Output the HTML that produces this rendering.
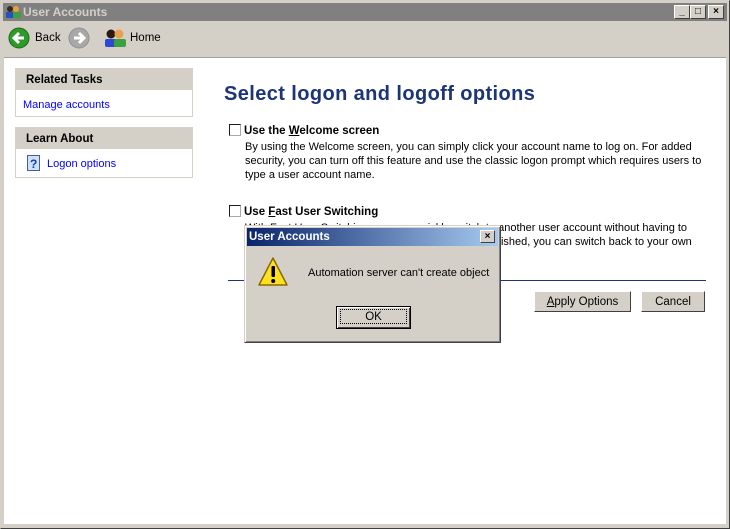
<!DOCTYPE html>
<html><head><style>
*{margin:0;padding:0;box-sizing:border-box}
body{width:730px;height:529px;background:#d4d0c8;font-family:"Liberation Sans",sans-serif;font-size:11px;position:relative;overflow:hidden}
.abs{position:absolute}
.frame{left:0;top:0;width:730px;height:529px;border:1px solid #d4d0c8;border-right-color:#404040;border-bottom-color:#404040}
.title{left:3px;top:3px;width:724px;height:18px;background:#808080;color:#d4d0c8;font-weight:bold;font-size:12px;line-height:18px;padding-left:20px}
.tb{width:16px;height:14px;top:5px;background:#d4d0c8;border:1px solid;border-color:#fff #404040 #404040 #fff;font-size:10px;line-height:11px;text-align:center;color:#000;font-weight:bold}
.content{left:4px;top:57px;width:722px;height:467px;background:#fff;border-top:1px solid #a0a0a0}
.box{left:15px;width:178px;border:1px solid #d4d0c8;background:#fff}
.box .h{background:#d4d0c8;font-weight:bold;height:21px;line-height:22px;padding-left:10px;font-size:11.5px}
.link{color:#0000ff}
h1{position:absolute;left:224px;top:83px;font-size:20px;color:#1c3478;font-family:"Liberation Sans",sans-serif;font-weight:bold;letter-spacing:0.4px}
.cb{width:12px;height:12px;border:1px solid #1c1c1c;border-right-color:#aaa;border-bottom-color:#aaa;background:#fff}
.opt{font-weight:bold;font-size:11.5px}
.desc{font-size:11px;line-height:14px;color:#000}
.btn{height:21px;background:#d4d0c8;border:1px solid;border-color:#fff #404040 #404040 #fff;text-align:center;line-height:20px;font-size:11.5px}
</style></head><body>
<div class="abs frame"></div>
<div class="abs title">User Accounts</div>
<svg class="abs" style="left:5px;top:5px" width="16" height="14"><circle cx="5" cy="4" r="3" fill="#3a2a1a"/><rect x="1" y="7" width="8" height="6" fill="#2a50c0"/><circle cx="11" cy="4" r="3" fill="#e8a040"/><rect x="8" y="7" width="8" height="6" fill="#3aa040"/></svg>
<div class="abs tb" style="left:674px">_</div>
<div class="abs tb" style="left:690px">□</div>
<div class="abs tb" style="left:708px">×</div>
<svg class="abs" style="left:8px;top:27px" width="22" height="22"><circle cx="11" cy="11" r="10" fill="#2f9a2a" stroke="#1d6a1a"/><path d="M16 11H7M11 6l-5 5 5 5" stroke="#fff" stroke-width="3" fill="none"/></svg>
<div class="abs" style="left:35px;top:32px;font-size:11.5px">Back</div>
<svg class="abs" style="left:68px;top:27px" width="22" height="22"><circle cx="11" cy="11" r="10" fill="#a8a8a8" stroke="#909090"/><path d="M6 11h9M11 6l5 5-5 5" stroke="#fff" stroke-width="3" fill="none"/></svg>
<svg class="abs" style="left:103px;top:28px" width="24" height="20"><circle cx="8" cy="6" r="4.5" fill="#2a1a10"/><rect x="2" y="11" width="12" height="8" rx="2" fill="#2a4ad0"/><circle cx="16" cy="6" r="4.5" fill="#e8a050"/><rect x="11" y="11" width="12" height="8" rx="2" fill="#3aa040"/></svg>
<div class="abs" style="left:130px;top:32px;font-size:11.5px">Home</div>
<div class="abs content"></div>
<div class="abs box" style="top:68px;height:49px"><div class="h">Related Tasks</div><div class="link" style="padding:9px 0 0 7px">Manage accounts</div></div>
<div class="abs box" style="top:127px;height:51px"><div class="h">Learn About</div>
<svg style="position:absolute;left:11px;top:27px" width="14" height="16"><rect x="0.5" y="0.5" width="12" height="15" fill="#cfe0f8" stroke="#4060a0"/><text x="3" y="13" font-size="12" font-weight="bold" fill="#1040a0" font-family="Liberation Sans">?</text></svg>
<div class="link" style="position:absolute;left:31px;top:30px">Logon options</div></div>
<h1>Select logon and logoff options</h1>
<div class="abs cb" style="left:229px;top:124px"></div>
<div class="abs opt" style="left:244px;top:125px">Use the <u>W</u>elcome screen</div>
<div class="abs desc" style="left:245px;top:140px;width:470px">By using the Welcome screen, you can simply click your account name to log on. For added security, you can turn off this feature and use the classic logon prompt which requires users to type a user account name.</div>
<div class="abs cb" style="left:229px;top:205px"></div>
<div class="abs opt" style="left:244px;top:206px">Use <u>F</u>ast User Switching</div>
<div class="abs desc" style="left:245px;top:221px;width:470px">With Fast User Switching, you can quickly switch to another user account without having to close any programs. Then, when the other user is finished, you can switch back to your own account.</div>
<div class="abs" style="left:228px;top:280px;width:478px;height:1px;background:#1c3478"></div>
<div class="abs btn" style="left:534px;top:291px;width:97px"><u>A</u>pply Options</div>
<div class="abs btn" style="left:641px;top:291px;width:64px">Cancel</div>
<div class="abs" style="left:244px;top:225px;width:257px;height:118px;background:#d4d0c8;border:1px solid;border-color:#d4d0c8 #404040 #404040 #d4d0c8;box-shadow:inset 1px 1px #fff,inset -1px -1px #808080"></div>
<div class="abs" style="left:247px;top:228px;width:251px;height:18px;background:linear-gradient(90deg,#0a246a,#a6caf0);color:#fff;font-weight:bold;font-size:11.5px;line-height:18px;padding-left:2px">User Accounts</div>
<div class="abs tb" style="left:480px;top:230px;width:15px;height:13px">×</div>
<svg class="abs" style="left:257px;top:256px" width="32" height="32"><path d="M16 2L30 29H2Z" fill="#ffe020" stroke="#8a6a00" stroke-width="1.5" stroke-linejoin="round"/><rect x="14.5" y="10" width="3.5" height="11" rx="1" fill="#000"/><circle cx="16.2" cy="25" r="2" fill="#000"/></svg>
<div class="abs" style="left:308px;top:267px;font-size:11px">Automation server can't create object</div>
<div class="abs btn" style="left:336px;top:306px;width:75px;height:23px;border:1px solid #000;box-shadow:inset 1px 1px #fff,inset -1px -1px #404040;line-height:20px"><span style="display:inline-block;border:1px dotted #000;width:67px;height:15px;line-height:14px;margin-top:2px">OK</span></div>
</body></html>
